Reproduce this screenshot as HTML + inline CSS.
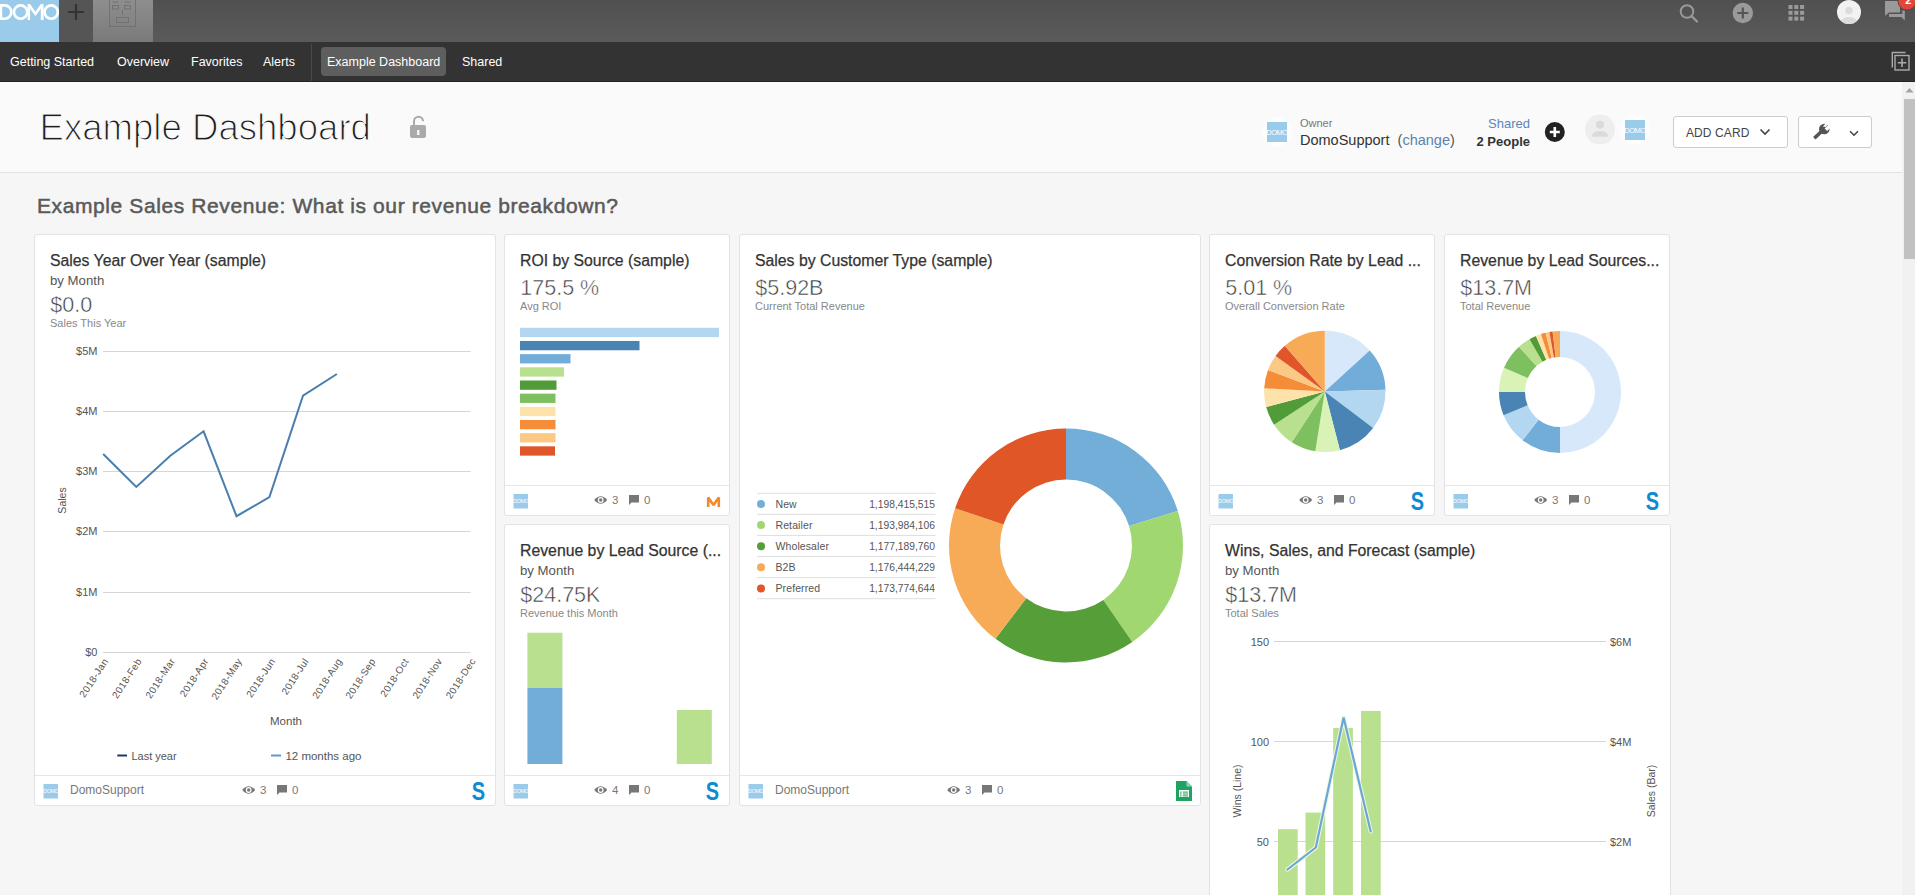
<!DOCTYPE html>
<html><head><meta charset="utf-8">
<style>
*{box-sizing:border-box}
html,body{margin:0;padding:0}
body{width:1915px;height:895px;overflow:hidden;position:relative;background:#f6f6f6;font-family:"Liberation Sans",sans-serif;color:#333}
.a{position:absolute}
#topbar{left:0;top:0;width:1915px;height:42px;background:linear-gradient(#505050,#5a5a5a)}
#nav{left:0;top:42px;width:1915px;height:40px;background:#333;border-bottom:1px solid #242424}
.nv{position:absolute;top:56px;font-size:12.5px;line-height:13px;color:#fff;white-space:nowrap}
#hdr{left:0;top:82px;width:1902px;height:91px;background:#fafafa;border-bottom:1px solid #e2e2e2}
.card{position:absolute;background:#fff;border:1px solid #e3e3e3;border-radius:3px}
.ct{position:absolute;left:15px;top:14px;font-size:16px;color:#333;white-space:nowrap}
.cs{position:absolute;left:15px;font-size:12.5px;color:#555;white-space:nowrap}
.cn{position:absolute;left:15px;font-size:22px;color:#555;white-space:nowrap}
.cl{position:absolute;left:15px;font-size:11px;color:#888;white-space:nowrap}
.ft{position:absolute;left:0;right:0;bottom:0;height:30px;border-top:1px solid #e6e6e6}
.ftx{position:absolute;top:7px;font-size:12px;color:#777;white-space:nowrap}
.ax{font-family:"Liberation Sans",sans-serif;font-size:11px;fill:#555}
</style></head><body>
<div id="topbar" class="a"></div>
<div id="nav" class="a"></div>
<div id="hdr" class="a"></div>

<!-- topbar content -->
<div class="a" style="left:0;top:0;width:59px;height:42px;background:#9bcbea;overflow:hidden">
 <svg width="59" height="42" style="position:absolute;left:0;top:0">
  <g fill="none" stroke="#fff" stroke-width="2.7">
   <path d="M0.85 20 V5.45 H4.7 A6.65 6.65 0 0 1 4.7 18.75 H0.85 Z"/>
   <circle cx="20.6" cy="12.1" r="6.65"/>
   
   <circle cx="51.2" cy="12.1" r="6.65"/>
  </g>
  <path d="M27.6 20 V4.1 H30.1 L35.4 11.8 L40.8 4.1 H43.6 V20 H40.8 V8.8 L35.4 16 L30.1 8.8 V20 Z" fill="#fff"/>
 </svg>
</div>
<div class="a" style="left:59px;top:0;width:34px;height:42px;background:#555"></div>
<svg class="a" style="left:67px;top:3px" width="18" height="18"><path d="M9 1 V17 M1 9 H17" stroke="#333" stroke-width="2.2"/></svg>
<div class="a" style="left:93px;top:0;width:60px;height:42px;background:linear-gradient(#8e8e8e,#7a7a7a)"></div>
<svg class="a" style="left:108px;top:0" width="30" height="28">
 <g fill="none" stroke="#727272" stroke-width="1">
  <rect x="1.5" y="-2" width="26" height="28.5"/>
  <path d="M4.5 2 H10.5 M16.5 2 H22.5"/>
  <rect x="4.5" y="5.5" width="6" height="3.5"/><rect x="16.5" y="5.5" width="6" height="3.5"/>
  <path d="M14.5 10 V14.5"/>
  <rect x="8.5" y="17.5" width="12" height="5"/>
 </g>
</svg>

<!-- right icons -->
<svg class="a" style="left:1676px;top:2px" width="26" height="24">
 <circle cx="11" cy="9.5" r="6.3" fill="none" stroke="#999" stroke-width="2"/>
 <path d="M15.5 14 L21 19.5" stroke="#999" stroke-width="2.4" stroke-linecap="round"/>
</svg>
<svg class="a" style="left:1730px;top:1px" width="26" height="26">
 <circle cx="12.8" cy="12" r="10.2" fill="#9a9a9a"/>
 <path d="M12.8 6.5 V17.5 M7.3 12 H18.3" stroke="#555" stroke-width="2.2"/>
</svg>
<svg class="a" style="left:1786px;top:3px" width="22" height="22">
 <g fill="#9a9a9a">
  <rect x="2.5" y="2" width="4" height="4"/><rect x="8.3" y="2" width="4" height="4"/><rect x="14.1" y="2" width="4" height="4"/>
  <rect x="2.5" y="7.8" width="4" height="4"/><rect x="8.3" y="7.8" width="4" height="4"/><rect x="14.1" y="7.8" width="4" height="4"/>
  <rect x="2.5" y="13.6" width="4" height="4"/><rect x="8.3" y="13.6" width="4" height="4"/><rect x="14.1" y="13.6" width="4" height="4"/>
 </g>
</svg>
<svg class="a" style="left:1835px;top:0" width="28" height="26">
 <defs><clipPath id="avc"><circle cx="14" cy="12" r="12"/></clipPath></defs>
 <circle cx="14" cy="12" r="12" fill="#f2f2f2"/>
 <g clip-path="url(#avc)" fill="#dcdcdc"><circle cx="14" cy="10.5" r="3.8"/><ellipse cx="14" cy="24" rx="9" ry="7"/></g>
</svg>
<svg class="a" style="left:1882px;top:0" width="33" height="26">
 <path d="M3 1 H18 V12.5 H7 L3 15.7 Z" fill="#9a9a9a"/>
 <path d="M7 14 H20.3 V10.5 H22.8 V20.5 L19.3 17 H7 Z" fill="#9a9a9a"/>
 <circle cx="25" cy="1.2" r="9" fill="#e0473b" stroke="#4a3a3a" stroke-width="0.8"/>
 <text x="26.3" y="3.6" font-size="11" font-weight="bold" fill="#fff" text-anchor="middle" font-family="Liberation Sans">2</text>
</svg>
<!-- nav -->
<div class="nv" style="left:10px">Getting Started</div>
<div class="nv" style="left:117px">Overview</div>
<div class="nv" style="left:191px">Favorites</div>
<div class="nv" style="left:263px">Alerts</div>
<div class="a" style="left:311px;top:44px;width:1px;height:37px;background:#4a4a4a"></div>
<div class="a" style="left:321px;top:47px;width:125px;height:29px;background:#5e5e5e;border-radius:4px"></div>
<div class="nv" style="left:327px">Example Dashboard</div>
<div class="nv" style="left:462px">Shared</div>
<svg class="a" style="left:1889px;top:50px" width="26" height="26">
 <g fill="none" stroke="#aaa" stroke-width="1.4">
  <path d="M3.3 17.5 V2.5 H16.5"/>
  <rect x="6" y="5.5" width="14" height="14.5"/>
  <path d="M13 8.5 V17 M8.8 12.7 H17.3" stroke-width="1.6"/>
 </g>
</svg>


<!-- header -->
<div class="a" style="left:39.5px;top:106px;font-size:36.6px;line-height:44px;color:#1e1e1e;white-space:nowrap;font-weight:normal;-webkit-text-stroke:1.2px #fafafa">Example Dashboard</div>
<svg class="a" style="left:408px;top:114px" width="20" height="26">
 <path d="M6 11 V7.2 A4.5 4.5 0 0 1 15 7.2" fill="none" stroke="#aaa" stroke-width="2"/>
 <rect x="2" y="11" width="16" height="12.9" rx="1.8" fill="#aaa"/>
 <rect x="9.1" y="16" width="2.3" height="5" fill="#fafafa"/>
</svg>
<div class="a" style="left:1262px;top:117px;width:30px;height:30px;border-radius:50%;background:#fdfdfd"></div>
<div class="a" style="left:1267px;top:122px;width:20px;height:20px;background:#9bcbea"></div>
<svg class="a" style="left:1267px;top:122px" width="20" height="20"><text x="10" y="13" font-size="7.5" fill="#fff" text-anchor="middle" font-family="Liberation Sans" letter-spacing="-0.5">DOMO</text></svg>
<div class="a" style="left:1300px;top:116px;font-size:11px;line-height:14px;color:#777;white-space:nowrap">Owner</div>
<div class="a" style="left:1300px;top:131px;font-size:14.5px;line-height:18px;color:#333;white-space:nowrap">DomoSupport&nbsp;&nbsp;<span style="color:#555">(</span><span style="color:#5a82b0">change</span><span style="color:#555">)</span></div>
<div class="a" style="left:1430px;top:116px;width:100px;text-align:right;font-size:13px;line-height:16px;color:#5a86b5;white-space:nowrap">Shared</div>
<div class="a" style="left:1430px;top:134px;width:100px;text-align:right;font-size:13px;line-height:16px;color:#333;font-weight:bold;white-space:nowrap">2 People</div>
<svg class="a" style="left:1544px;top:121px" width="22" height="22">
 <circle cx="10.8" cy="11" r="10" fill="#222"/>
 <path d="M10.8 6 V16 M5.8 11 H15.8" stroke="#fff" stroke-width="2.6"/>
</svg>
<svg class="a" style="left:1584px;top:114px" width="32" height="32">
 <circle cx="16" cy="15.6" r="15" fill="#eeeeee"/>
 <circle cx="16" cy="10.8" r="4" fill="#dadada"/>
 <path d="M8 22.8 C8 18.6 11.5 17 16 17 C20.5 17 24 18.6 24 22.8 Z" fill="#dadada"/>
</svg>
<div class="a" style="left:1620px;top:115px;width:30px;height:30px;border-radius:50%;background:#fdfdfd"></div>
<div class="a" style="left:1625px;top:120px;width:20px;height:20px;background:#9bcbea"></div>
<svg class="a" style="left:1625px;top:120px" width="20" height="20"><text x="10" y="13" font-size="7.5" fill="#fff" text-anchor="middle" font-family="Liberation Sans" letter-spacing="-0.5">DOMO</text></svg>
<div class="a" style="left:1673px;top:116px;width:115px;height:32px;border:1px solid #cdcdcd;border-radius:3px;background:#fff"></div>
<div class="a" style="left:1686px;top:126px;font-size:12px;line-height:14px;color:#444;letter-spacing:0.1px;white-space:nowrap">ADD CARD</div>
<svg class="a" style="left:1759px;top:127px" width="12" height="10"><path d="M1.5 2.5 L6 7 L10.5 2.5" fill="none" stroke="#444" stroke-width="1.6"/></svg>
<div class="a" style="left:1798px;top:116px;width:74px;height:32px;border:1px solid #cdcdcd;border-radius:3px;background:#fff"></div>
<svg class="a" style="left:1808px;top:117px" width="26" height="26">
 <path d="M6.3 21.2 L14.5 13.5" stroke="#555" stroke-width="3.6" stroke-linecap="butt"/>
 <circle cx="16.3" cy="12" r="5.3" fill="#555"/>
 <path d="M16.6 11.6 L20.5 7.7 L23 10.2 L19.1 14.1 Z" fill="#fdfdfd"/>
 <path d="M14.8 9.5 L18.7 5.6 L21.5 6 L17.5 10 Z" fill="#fdfdfd"/>
</svg>
<svg class="a" style="left:1848px;top:128px" width="12" height="10"><path d="M2 3.3 L6 7.3 L10 3.3" fill="none" stroke="#444" stroke-width="1.5"/></svg>
<!-- scrollbar -->
<div class="a" style="left:1902px;top:82px;width:13px;height:813px;background:#f1f1f1"></div>
<div class="a" style="left:1904px;top:99px;width:11px;height:160px;background:#c1c1c1"></div>
<svg class="a" style="left:1904px;top:86px" width="11" height="8"><path d="M1.5 6.5 L5.5 2 L9.5 6.5 Z" fill="#a3a3a3"/></svg>
<!-- section title -->
<div class="a" style="left:37px;top:193px;font-size:21px;line-height:26px;color:#595959;letter-spacing:0.6px;-webkit-text-stroke:0.5px #595959;white-space:nowrap">Example Sales Revenue: What is our revenue breakdown?</div>
<div class="card" style="left:34px;top:234px;width:462px;height:572px"></div>
<div class="card" style="left:504px;top:234px;width:226px;height:282px"></div>
<div class="card" style="left:504px;top:524px;width:226px;height:282px"></div>
<div class="card" style="left:739px;top:234px;width:462px;height:572px"></div>
<div class="card" style="left:1209px;top:234px;width:226px;height:282px"></div>
<div class="card" style="left:1444px;top:234px;width:226px;height:282px"></div>
<div class="card" style="left:1209px;top:524px;width:462px;height:400px"></div>
<svg class="a" style="left:0;top:0" width="1915" height="895" font-family="Liberation Sans">
<text x="50" y="266" font-size="15.8" fill="#333" text-anchor="start" stroke="#333" stroke-width="0.25">Sales Year Over Year (sample)</text>
<text x="50" y="284.6" font-size="13.2" fill="#555" text-anchor="start" >by Month</text>
<text x="50.3" y="311.6" font-size="21.5" fill="#3a3a3a" text-anchor="start" stroke="#fff" stroke-width="0.5">$0.0</text>
<text x="50" y="327" font-size="11" fill="#888" text-anchor="start" >Sales This Year</text>
<line x1="103" y1="351.5" x2="470.5" y2="351.5" stroke="#d6d6d6" stroke-width="1"/>
<text x="97.5" y="354.8" font-size="11" fill="#555" text-anchor="end" >$5M</text>
<line x1="103" y1="411.5" x2="470.5" y2="411.5" stroke="#d6d6d6" stroke-width="1"/>
<text x="97.5" y="414.8" font-size="11" fill="#555" text-anchor="end" >$4M</text>
<line x1="103" y1="471.5" x2="470.5" y2="471.5" stroke="#d6d6d6" stroke-width="1"/>
<text x="97.5" y="474.8" font-size="11" fill="#555" text-anchor="end" >$3M</text>
<line x1="103" y1="531.5" x2="470.5" y2="531.5" stroke="#d6d6d6" stroke-width="1"/>
<text x="97.5" y="534.8" font-size="11" fill="#555" text-anchor="end" >$2M</text>
<line x1="103" y1="592.5" x2="470.5" y2="592.5" stroke="#d6d6d6" stroke-width="1"/>
<text x="97.5" y="595.8" font-size="11" fill="#555" text-anchor="end" >$1M</text>
<line x1="103" y1="652.5" x2="470.5" y2="652.5" stroke="#d6d6d6" stroke-width="1"/>
<text x="97.5" y="655.8" font-size="11" fill="#555" text-anchor="end" >$0</text>
<text x="0" y="0" font-size="10.5" fill="#555" text-anchor="middle" transform="translate(65.5 500.5) rotate(-90)">Sales</text>
<text x="0" y="0" font-size="9.9" fill="#555" text-anchor="end" letter-spacing="0.4" transform="translate(108.7 661) rotate(-57)">2018-Jan</text>
<text x="0" y="0" font-size="9.9" fill="#555" text-anchor="end" letter-spacing="0.4" transform="translate(142.1 661) rotate(-57)">2018-Feb</text>
<text x="0" y="0" font-size="9.9" fill="#555" text-anchor="end" letter-spacing="0.4" transform="translate(175.5 661) rotate(-57)">2018-Mar</text>
<text x="0" y="0" font-size="9.9" fill="#555" text-anchor="end" letter-spacing="0.4" transform="translate(208.9 661) rotate(-57)">2018-Apr</text>
<text x="0" y="0" font-size="9.9" fill="#555" text-anchor="end" letter-spacing="0.4" transform="translate(242.3 661) rotate(-57)">2018-May</text>
<text x="0" y="0" font-size="9.9" fill="#555" text-anchor="end" letter-spacing="0.4" transform="translate(275.7 661) rotate(-57)">2018-Jun</text>
<text x="0" y="0" font-size="9.9" fill="#555" text-anchor="end" letter-spacing="0.4" transform="translate(309.1 661) rotate(-57)">2018-Jul</text>
<text x="0" y="0" font-size="9.9" fill="#555" text-anchor="end" letter-spacing="0.4" transform="translate(342.5 661) rotate(-57)">2018-Aug</text>
<text x="0" y="0" font-size="9.9" fill="#555" text-anchor="end" letter-spacing="0.4" transform="translate(375.9 661) rotate(-57)">2018-Sep</text>
<text x="0" y="0" font-size="9.9" fill="#555" text-anchor="end" letter-spacing="0.4" transform="translate(409.3 661) rotate(-57)">2018-Oct</text>
<text x="0" y="0" font-size="9.9" fill="#555" text-anchor="end" letter-spacing="0.4" transform="translate(442.7 661) rotate(-57)">2018-Nov</text>
<text x="0" y="0" font-size="9.9" fill="#555" text-anchor="end" letter-spacing="0.4" transform="translate(476.1 661) rotate(-57)">2018-Dec</text>
<text x="286" y="725" font-size="11.5" fill="#555" text-anchor="middle" >Month</text>
<polyline points="103.2,454 136.3,486.9 170.3,455.7 203.6,431.3 236.5,516.2 269.4,497.1 303,395.6 336.9,374" fill="none" stroke="#4a7ead" stroke-width="2" stroke-linejoin="miter"/>
<line x1="117.3" y1="755.5" x2="127" y2="755.5" stroke="#1b3a5e" stroke-width="2"/>
<text x="131.4" y="759.6" font-size="11" fill="#555" text-anchor="start" >Last year</text>
<line x1="271" y1="755.5" x2="281" y2="755.5" stroke="#5b9bd0" stroke-width="2"/>
<text x="285.4" y="759.6" font-size="11.5" fill="#555" text-anchor="start" >12 months ago</text>
<line x1="35" y1="775.5" x2="495" y2="775.5" stroke="#e6e6e6" stroke-width="1"/>
<rect x="43.5" y="784" width="14.5" height="14.5" fill="#9bcbea"/>
<text x="50.75" y="793.28" font-size="5.22" fill="#fff" text-anchor="middle" letter-spacing="-0.3">DOMO</text>
<text x="70" y="794.2" font-size="12" fill="#777" text-anchor="start" >DomoSupport</text>
<path d="M242.2 790 Q248.7 782.5 255.2 790 Q248.7 797.5 242.2 790 Z" fill="#777"/>
<circle cx="248.7" cy="790" r="2.9" fill="#fff"/>
<circle cx="248.7" cy="790" r="1.7" fill="#777"/>
<text x="260.0" y="794" font-size="11.5" fill="#777" text-anchor="start" >3</text>
<path d="M277.0 785 H287.0 V792.5 H279.5 L277.0 795 Z" fill="#777"/>
<text x="292.0" y="794" font-size="11.5" fill="#777" text-anchor="start" >0</text>
<text x="0" y="799.6" font-size="25" fill="#0f8bd2" text-anchor="middle" font-weight="bold" transform="translate(478.5 0) scale(0.8 1)">S</text>
<text x="520" y="266" font-size="15.8" fill="#333" text-anchor="start" stroke="#333" stroke-width="0.25">ROI by Source (sample)</text>
<text x="520.3" y="294.6" font-size="21.5" fill="#3a3a3a" text-anchor="start" stroke="#fff" stroke-width="0.5">175.5 %</text>
<text x="520" y="310" font-size="11" fill="#888" text-anchor="start" >Avg ROI</text>
<rect x="520" y="327.80" width="199" height="9.3" fill="#b3d6f1"/>
<rect x="520" y="340.97" width="119.5" height="9.3" fill="#4a84b5"/>
<rect x="520" y="354.14" width="50.5" height="9.3" fill="#72acd9"/>
<rect x="520" y="367.31" width="44" height="9.3" fill="#b8e08e"/>
<rect x="520" y="380.48" width="36.5" height="9.3" fill="#519c38"/>
<rect x="520" y="393.65" width="35.5" height="9.3" fill="#7ec060"/>
<rect x="520" y="406.82" width="35.5" height="9.3" fill="#fde3aa"/>
<rect x="520" y="419.99" width="35.5" height="9.3" fill="#f58c38"/>
<rect x="520" y="433.16" width="35.5" height="9.3" fill="#fcc985"/>
<rect x="520" y="446.33" width="35" height="9.3" fill="#e0562a"/>
<line x1="505" y1="485.5" x2="729" y2="485.5" stroke="#e6e6e6" stroke-width="1"/>
<rect x="513.5" y="494" width="14.5" height="14.5" fill="#9bcbea"/>
<text x="520.75" y="503.28" font-size="5.22" fill="#fff" text-anchor="middle" letter-spacing="-0.3">DOMO</text>
<path d="M594.2 500 Q600.7 492.5 607.2 500 Q600.7 507.5 594.2 500 Z" fill="#777"/>
<circle cx="600.7" cy="500" r="2.9" fill="#fff"/>
<circle cx="600.7" cy="500" r="1.7" fill="#777"/>
<text x="612.0" y="504" font-size="11.5" fill="#777" text-anchor="start" >3</text>
<path d="M629.0 495 H639.0 V502.5 H631.5 L629.0 505 Z" fill="#777"/>
<text x="644.0" y="504" font-size="11.5" fill="#777" text-anchor="start" >0</text>
<path d="M708.2 507 V497.5 L713.5 505 L718.8 497.5 V507" fill="none" stroke="#f08a2a" stroke-width="2.6" stroke-linejoin="bevel"/>
<text x="520" y="556" font-size="15.8" fill="#333" text-anchor="start" stroke="#333" stroke-width="0.25">Revenue by Lead Source (...</text>
<text x="520" y="574.6" font-size="13.2" fill="#555" text-anchor="start" >by Month</text>
<text x="520.3" y="601.6" font-size="21.5" fill="#3a3a3a" text-anchor="start" stroke="#fff" stroke-width="0.5">$24.75K</text>
<text x="520" y="617" font-size="11" fill="#888" text-anchor="start" >Revenue this Month</text>
<rect x="527.4" y="632.7" width="35" height="55.3" fill="#b8e08e"/>
<rect x="527.4" y="688" width="35" height="76" fill="#72acd9"/>
<rect x="676.8" y="710" width="35" height="54" fill="#b8e08e"/>
<line x1="505" y1="775.5" x2="729" y2="775.5" stroke="#e6e6e6" stroke-width="1"/>
<rect x="513.5" y="784" width="14.5" height="14.5" fill="#9bcbea"/>
<text x="520.75" y="793.28" font-size="5.22" fill="#fff" text-anchor="middle" letter-spacing="-0.3">DOMO</text>
<path d="M594.2 790 Q600.7 782.5 607.2 790 Q600.7 797.5 594.2 790 Z" fill="#777"/>
<circle cx="600.7" cy="790" r="2.9" fill="#fff"/>
<circle cx="600.7" cy="790" r="1.7" fill="#777"/>
<text x="612.0" y="794" font-size="11.5" fill="#777" text-anchor="start" >4</text>
<path d="M629.0 785 H639.0 V792.5 H631.5 L629.0 795 Z" fill="#777"/>
<text x="644.0" y="794" font-size="11.5" fill="#777" text-anchor="start" >0</text>
<text x="0" y="799.6" font-size="25" fill="#0f8bd2" text-anchor="middle" font-weight="bold" transform="translate(712.5 0) scale(0.8 1)">S</text>
<text x="755" y="266" font-size="15.8" fill="#333" text-anchor="start" stroke="#333" stroke-width="0.25">Sales by Customer Type (sample)</text>
<text x="755.3" y="294.6" font-size="21.5" fill="#3a3a3a" text-anchor="start" stroke="#fff" stroke-width="0.5">$5.92B</text>
<text x="755" y="310" font-size="11" fill="#888" text-anchor="start" >Current Total Revenue</text>
<path d="M1066.00 428.50 A117 117 0 0 1 1177.82 511.06 L1129.08 526.07 A66 66 0 0 0 1066.00 479.50 Z" fill="#72aed8"/>
<path d="M1177.82 511.06 A117 117 0 0 1 1132.29 641.91 L1103.39 599.88 A66 66 0 0 0 1129.08 526.07 Z" fill="#a0d771"/>
<path d="M1132.29 641.91 A117 117 0 0 1 995.46 638.85 L1026.21 598.16 A66 66 0 0 0 1103.39 599.88 Z" fill="#569e38"/>
<path d="M995.46 638.85 A117 117 0 0 1 955.12 508.14 L1003.45 524.43 A66 66 0 0 0 1026.21 598.16 Z" fill="#f8ab56"/>
<path d="M955.12 508.14 A117 117 0 0 1 1066.00 428.50 L1066.00 479.50 A66 66 0 0 0 1003.45 524.43 Z" fill="#e05626"/>
<line x1="757" y1="493.3" x2="935.5" y2="493.3" stroke="#dedede" stroke-width="1"/>
<line x1="757" y1="514.3" x2="935.5" y2="514.3" stroke="#dedede" stroke-width="1"/>
<line x1="757" y1="535.4" x2="935.5" y2="535.4" stroke="#dedede" stroke-width="1"/>
<line x1="757" y1="556.5" x2="935.5" y2="556.5" stroke="#dedede" stroke-width="1"/>
<line x1="757" y1="577.6" x2="935.5" y2="577.6" stroke="#dedede" stroke-width="1"/>
<line x1="757" y1="598.7" x2="935.5" y2="598.7" stroke="#dedede" stroke-width="1"/>
<circle cx="761" cy="504.1" r="4" fill="#72aed8"/>
<text x="775.5" y="507.59999999999997" font-size="10.5" fill="#555" text-anchor="start" letter-spacing="0.1">New</text>
<text x="935" y="507.59999999999997" font-size="10.3" fill="#555" text-anchor="end" >1,198,415,515</text>
<circle cx="761" cy="525.1" r="4" fill="#a0d771"/>
<text x="775.5" y="528.6499999999999" font-size="10.5" fill="#555" text-anchor="start" letter-spacing="0.1">Retailer</text>
<text x="935" y="528.6499999999999" font-size="10.3" fill="#555" text-anchor="end" >1,193,984,106</text>
<circle cx="761" cy="546.2" r="4" fill="#569e38"/>
<text x="775.5" y="549.75" font-size="10.5" fill="#555" text-anchor="start" letter-spacing="0.1">Wholesaler</text>
<text x="935" y="549.75" font-size="10.3" fill="#555" text-anchor="end" >1,177,189,760</text>
<circle cx="761" cy="567.3" r="4" fill="#f8ab56"/>
<text x="775.5" y="570.8499999999999" font-size="10.5" fill="#555" text-anchor="start" letter-spacing="0.1">B2B</text>
<text x="935" y="570.8499999999999" font-size="10.3" fill="#555" text-anchor="end" >1,176,444,229</text>
<circle cx="761" cy="588.5" r="4" fill="#e05626"/>
<text x="775.5" y="591.95" font-size="10.5" fill="#555" text-anchor="start" letter-spacing="0.1">Preferred</text>
<text x="935" y="591.95" font-size="10.3" fill="#555" text-anchor="end" >1,173,774,644</text>
<line x1="740" y1="775.5" x2="1200" y2="775.5" stroke="#e6e6e6" stroke-width="1"/>
<rect x="748.5" y="784" width="14.5" height="14.5" fill="#9bcbea"/>
<text x="755.75" y="793.28" font-size="5.22" fill="#fff" text-anchor="middle" letter-spacing="-0.3">DOMO</text>
<text x="775" y="794.2" font-size="12" fill="#777" text-anchor="start" >DomoSupport</text>
<path d="M947.2 790 Q953.7 782.5 960.2 790 Q953.7 797.5 947.2 790 Z" fill="#777"/>
<circle cx="953.7" cy="790" r="2.9" fill="#fff"/>
<circle cx="953.7" cy="790" r="1.7" fill="#777"/>
<text x="965.0" y="794" font-size="11.5" fill="#777" text-anchor="start" >3</text>
<path d="M982.0 785 H992.0 V792.5 H984.5 L982.0 795 Z" fill="#777"/>
<text x="997.0" y="794" font-size="11.5" fill="#777" text-anchor="start" >0</text>
<path d="M1176 781 H1186.5 L1192 786.5 V801 H1176 Z" fill="#1ea362"/>
<path d="M1186.5 781 L1192 786.5 H1186.5 Z" fill="#8ed1b1"/>
<rect x="1179" y="790" width="10" height="7" fill="#fff"/>
<rect x="1180" y="791.6" width="1.6" height="1" fill="#1ea362"/><rect x="1182.8" y="791.6" width="5.2" height="1" fill="#1ea362"/>
<rect x="1180" y="793.5" width="1.6" height="1" fill="#1ea362"/><rect x="1182.8" y="793.5" width="5.2" height="1" fill="#1ea362"/>
<rect x="1180" y="795.4" width="1.6" height="1" fill="#1ea362"/><rect x="1182.8" y="795.4" width="5.2" height="1" fill="#1ea362"/>
<text x="1225" y="266" font-size="15.8" fill="#333" text-anchor="start" stroke="#333" stroke-width="0.25">Conversion Rate by Lead ...</text>
<text x="1225.3" y="294.6" font-size="21.5" fill="#3a3a3a" text-anchor="start" stroke="#fff" stroke-width="0.5">5.01 %</text>
<text x="1225" y="310" font-size="11" fill="#888" text-anchor="start" >Overall Conversion Rate</text>
<path d="M1324.8 391.4 L1324.80 330.70 A60.7 60.7 0 0 1 1369.70 350.55 Z" fill="#d6e8f9"/>
<path d="M1324.8 391.4 L1369.70 350.55 A60.7 60.7 0 0 1 1385.48 389.81 Z" fill="#72acd9"/>
<path d="M1324.8 391.4 L1385.48 389.81 A60.7 60.7 0 0 1 1373.15 428.10 Z" fill="#b3d6f1"/>
<path d="M1324.8 391.4 L1373.15 428.10 A60.7 60.7 0 0 1 1339.90 450.19 Z" fill="#4a84b5"/>
<path d="M1324.8 391.4 L1339.90 450.19 A60.7 60.7 0 0 1 1315.30 451.35 Z" fill="#d9f2b6"/>
<path d="M1324.8 391.4 L1315.30 451.35 A60.7 60.7 0 0 1 1291.74 442.31 Z" fill="#7ec060"/>
<path d="M1324.8 391.4 L1291.74 442.31 A60.7 60.7 0 0 1 1274.07 424.73 Z" fill="#b8e08e"/>
<path d="M1324.8 391.4 L1274.07 424.73 A60.7 60.7 0 0 1 1266.17 407.11 Z" fill="#519c38"/>
<path d="M1324.8 391.4 L1266.17 407.11 A60.7 60.7 0 0 1 1264.18 388.22 Z" fill="#fde3aa"/>
<path d="M1324.8 391.4 L1264.18 388.22 A60.7 60.7 0 0 1 1268.02 369.94 Z" fill="#f58c38"/>
<path d="M1324.8 391.4 L1268.02 369.94 A60.7 60.7 0 0 1 1275.57 355.89 Z" fill="#fcc985"/>
<path d="M1324.8 391.4 L1275.57 355.89 A60.7 60.7 0 0 1 1284.82 345.73 Z" fill="#e0562a"/>
<path d="M1324.8 391.4 L1284.82 345.73 A60.7 60.7 0 0 1 1324.80 330.70 Z" fill="#f8ab56"/>
<line x1="1210" y1="485.5" x2="1434" y2="485.5" stroke="#e6e6e6" stroke-width="1"/>
<rect x="1218.5" y="494" width="14.5" height="14.5" fill="#9bcbea"/>
<text x="1225.75" y="503.28" font-size="5.22" fill="#fff" text-anchor="middle" letter-spacing="-0.3">DOMO</text>
<path d="M1299.2 500 Q1305.7 492.5 1312.2 500 Q1305.7 507.5 1299.2 500 Z" fill="#777"/>
<circle cx="1305.7" cy="500" r="2.9" fill="#fff"/>
<circle cx="1305.7" cy="500" r="1.7" fill="#777"/>
<text x="1317.0" y="504" font-size="11.5" fill="#777" text-anchor="start" >3</text>
<path d="M1334.0 495 H1344.0 V502.5 H1336.5 L1334.0 505 Z" fill="#777"/>
<text x="1349.0" y="504" font-size="11.5" fill="#777" text-anchor="start" >0</text>
<text x="0" y="509.6" font-size="25" fill="#0f8bd2" text-anchor="middle" font-weight="bold" transform="translate(1417.5 0) scale(0.8 1)">S</text>
<text x="1460" y="266" font-size="15.8" fill="#333" text-anchor="start" stroke="#333" stroke-width="0.25">Revenue by Lead Sources...</text>
<text x="1460.3" y="294.6" font-size="21.5" fill="#3a3a3a" text-anchor="start" stroke="#fff" stroke-width="0.5">$13.7M</text>
<text x="1460" y="310" font-size="11" fill="#888" text-anchor="start" >Total Revenue</text>
<path d="M1560.00 331.00 A61 61 0 0 1 1560.00 453.00 L1560.00 427.00 A35 35 0 0 0 1560.00 357.00 Z" fill="#d6e8f9"/>
<path d="M1560.00 453.00 A61 61 0 0 1 1522.61 440.20 L1538.55 419.66 A35 35 0 0 0 1560.00 427.00 Z" fill="#72acd9"/>
<path d="M1522.61 440.20 A61 61 0 0 1 1503.60 415.25 L1527.64 405.34 A35 35 0 0 0 1538.55 419.66 Z" fill="#b3d6f1"/>
<path d="M1503.60 415.25 A61 61 0 0 1 1499.00 392.00 L1525.00 392.00 A35 35 0 0 0 1527.64 405.34 Z" fill="#4a84b5"/>
<path d="M1499.00 392.00 A61 61 0 0 1 1504.02 367.77 L1527.88 378.10 A35 35 0 0 0 1525.00 392.00 Z" fill="#d9f2b6"/>
<path d="M1504.02 367.77 A61 61 0 0 1 1519.03 346.81 L1536.49 366.07 A35 35 0 0 0 1527.88 378.10 Z" fill="#7ec060"/>
<path d="M1519.03 346.81 A61 61 0 0 1 1529.50 339.17 L1542.50 361.69 A35 35 0 0 0 1536.49 366.07 Z" fill="#b8e08e"/>
<path d="M1529.50 339.17 A61 61 0 0 1 1535.97 335.93 L1546.21 359.83 A35 35 0 0 0 1542.50 361.69 Z" fill="#519c38"/>
<path d="M1535.97 335.93 A61 61 0 0 1 1540.95 334.05 L1549.07 358.75 A35 35 0 0 0 1546.21 359.83 Z" fill="#fde3aa"/>
<path d="M1540.95 334.05 A61 61 0 0 1 1545.66 332.71 L1551.77 357.98 A35 35 0 0 0 1549.07 358.75 Z" fill="#f58c38"/>
<path d="M1545.66 332.71 A61 61 0 0 1 1549.41 331.93 L1553.92 357.53 A35 35 0 0 0 1551.77 357.98 Z" fill="#fcc985"/>
<path d="M1549.41 331.93 A61 61 0 0 1 1552.57 331.45 L1555.73 357.26 A35 35 0 0 0 1553.92 357.53 Z" fill="#e0562a"/>
<path d="M1552.57 331.45 A61 61 0 0 1 1560.00 331.00 L1560.00 357.00 A35 35 0 0 0 1555.73 357.26 Z" fill="#f8ab56"/>
<line x1="1445" y1="485.5" x2="1669" y2="485.5" stroke="#e6e6e6" stroke-width="1"/>
<rect x="1453.5" y="494" width="14.5" height="14.5" fill="#9bcbea"/>
<text x="1460.75" y="503.28" font-size="5.22" fill="#fff" text-anchor="middle" letter-spacing="-0.3">DOMO</text>
<path d="M1534.2 500 Q1540.7 492.5 1547.2 500 Q1540.7 507.5 1534.2 500 Z" fill="#777"/>
<circle cx="1540.7" cy="500" r="2.9" fill="#fff"/>
<circle cx="1540.7" cy="500" r="1.7" fill="#777"/>
<text x="1552.0" y="504" font-size="11.5" fill="#777" text-anchor="start" >3</text>
<path d="M1569.0 495 H1579.0 V502.5 H1571.5 L1569.0 505 Z" fill="#777"/>
<text x="1584.0" y="504" font-size="11.5" fill="#777" text-anchor="start" >0</text>
<text x="0" y="509.6" font-size="25" fill="#0f8bd2" text-anchor="middle" font-weight="bold" transform="translate(1652.5 0) scale(0.8 1)">S</text>
<text x="1225" y="556" font-size="15.8" fill="#333" text-anchor="start" stroke="#333" stroke-width="0.25">Wins, Sales, and Forecast (sample)</text>
<text x="1225" y="574.6" font-size="13.2" fill="#555" text-anchor="start" >by Month</text>
<text x="1225.3" y="601.6" font-size="21.5" fill="#3a3a3a" text-anchor="start" stroke="#fff" stroke-width="0.5">$13.7M</text>
<text x="1225" y="617" font-size="11" fill="#888" text-anchor="start" >Total Sales</text>
<line x1="1274" y1="641.5" x2="1606" y2="641.5" stroke="#d6d6d6" stroke-width="1"/>
<text x="1269" y="645.5" font-size="11" fill="#555" text-anchor="end" >150</text>
<text x="1610" y="645.5" font-size="11" fill="#555" text-anchor="start" >$6M</text>
<line x1="1274" y1="741.5" x2="1606" y2="741.5" stroke="#d6d6d6" stroke-width="1"/>
<text x="1269" y="745.5" font-size="11" fill="#555" text-anchor="end" >100</text>
<text x="1610" y="745.5" font-size="11" fill="#555" text-anchor="start" >$4M</text>
<line x1="1274" y1="841.5" x2="1606" y2="841.5" stroke="#d6d6d6" stroke-width="1"/>
<text x="1269" y="845.5" font-size="11" fill="#555" text-anchor="end" >50</text>
<text x="1610" y="845.5" font-size="11" fill="#555" text-anchor="start" >$2M</text>
<text x="0" y="0" font-size="10.5" fill="#555" text-anchor="middle" transform="translate(1240.5 791) rotate(-90)">Wins (Line)</text>
<text x="0" y="0" font-size="10.5" fill="#555" text-anchor="middle" transform="translate(1655 791) rotate(-90)">Sales (Bar)</text>
<rect x="1278" y="829.2" width="19.7" height="70.79999999999995" fill="#b8e08e"/>
<rect x="1305.5" y="812.6" width="19.7" height="87.39999999999998" fill="#b8e08e"/>
<rect x="1333.2" y="727.9" width="19.7" height="172.10000000000002" fill="#b8e08e"/>
<rect x="1361" y="710.9" width="19.7" height="189.10000000000002" fill="#b8e08e"/>
<polyline points="1287.4,869.5 1315.8,847.5 1343.6,717.4 1370.7,831.4" fill="none" stroke="#eef7e6" stroke-width="4.2" stroke-linecap="round" stroke-linejoin="round"/>
<polyline points="1287.4,869.5 1315.8,847.5 1343.6,717.4 1370.7,831.4" fill="none" stroke="#6aa6d6" stroke-width="2.2" stroke-linecap="round" stroke-linejoin="miter"/>
</svg>
<div class="a" style="left:1902px;top:82px;width:13px;height:813px;background:#f1f1f1"></div>
<div class="a" style="left:1904px;top:99px;width:11px;height:160px;background:#c1c1c1"></div>
<svg class="a" style="left:1904px;top:86px" width="11" height="8"><path d="M1.5 6.5 L5.5 2 L9.5 6.5 Z" fill="#a3a3a3"/></svg>
</body></html>
